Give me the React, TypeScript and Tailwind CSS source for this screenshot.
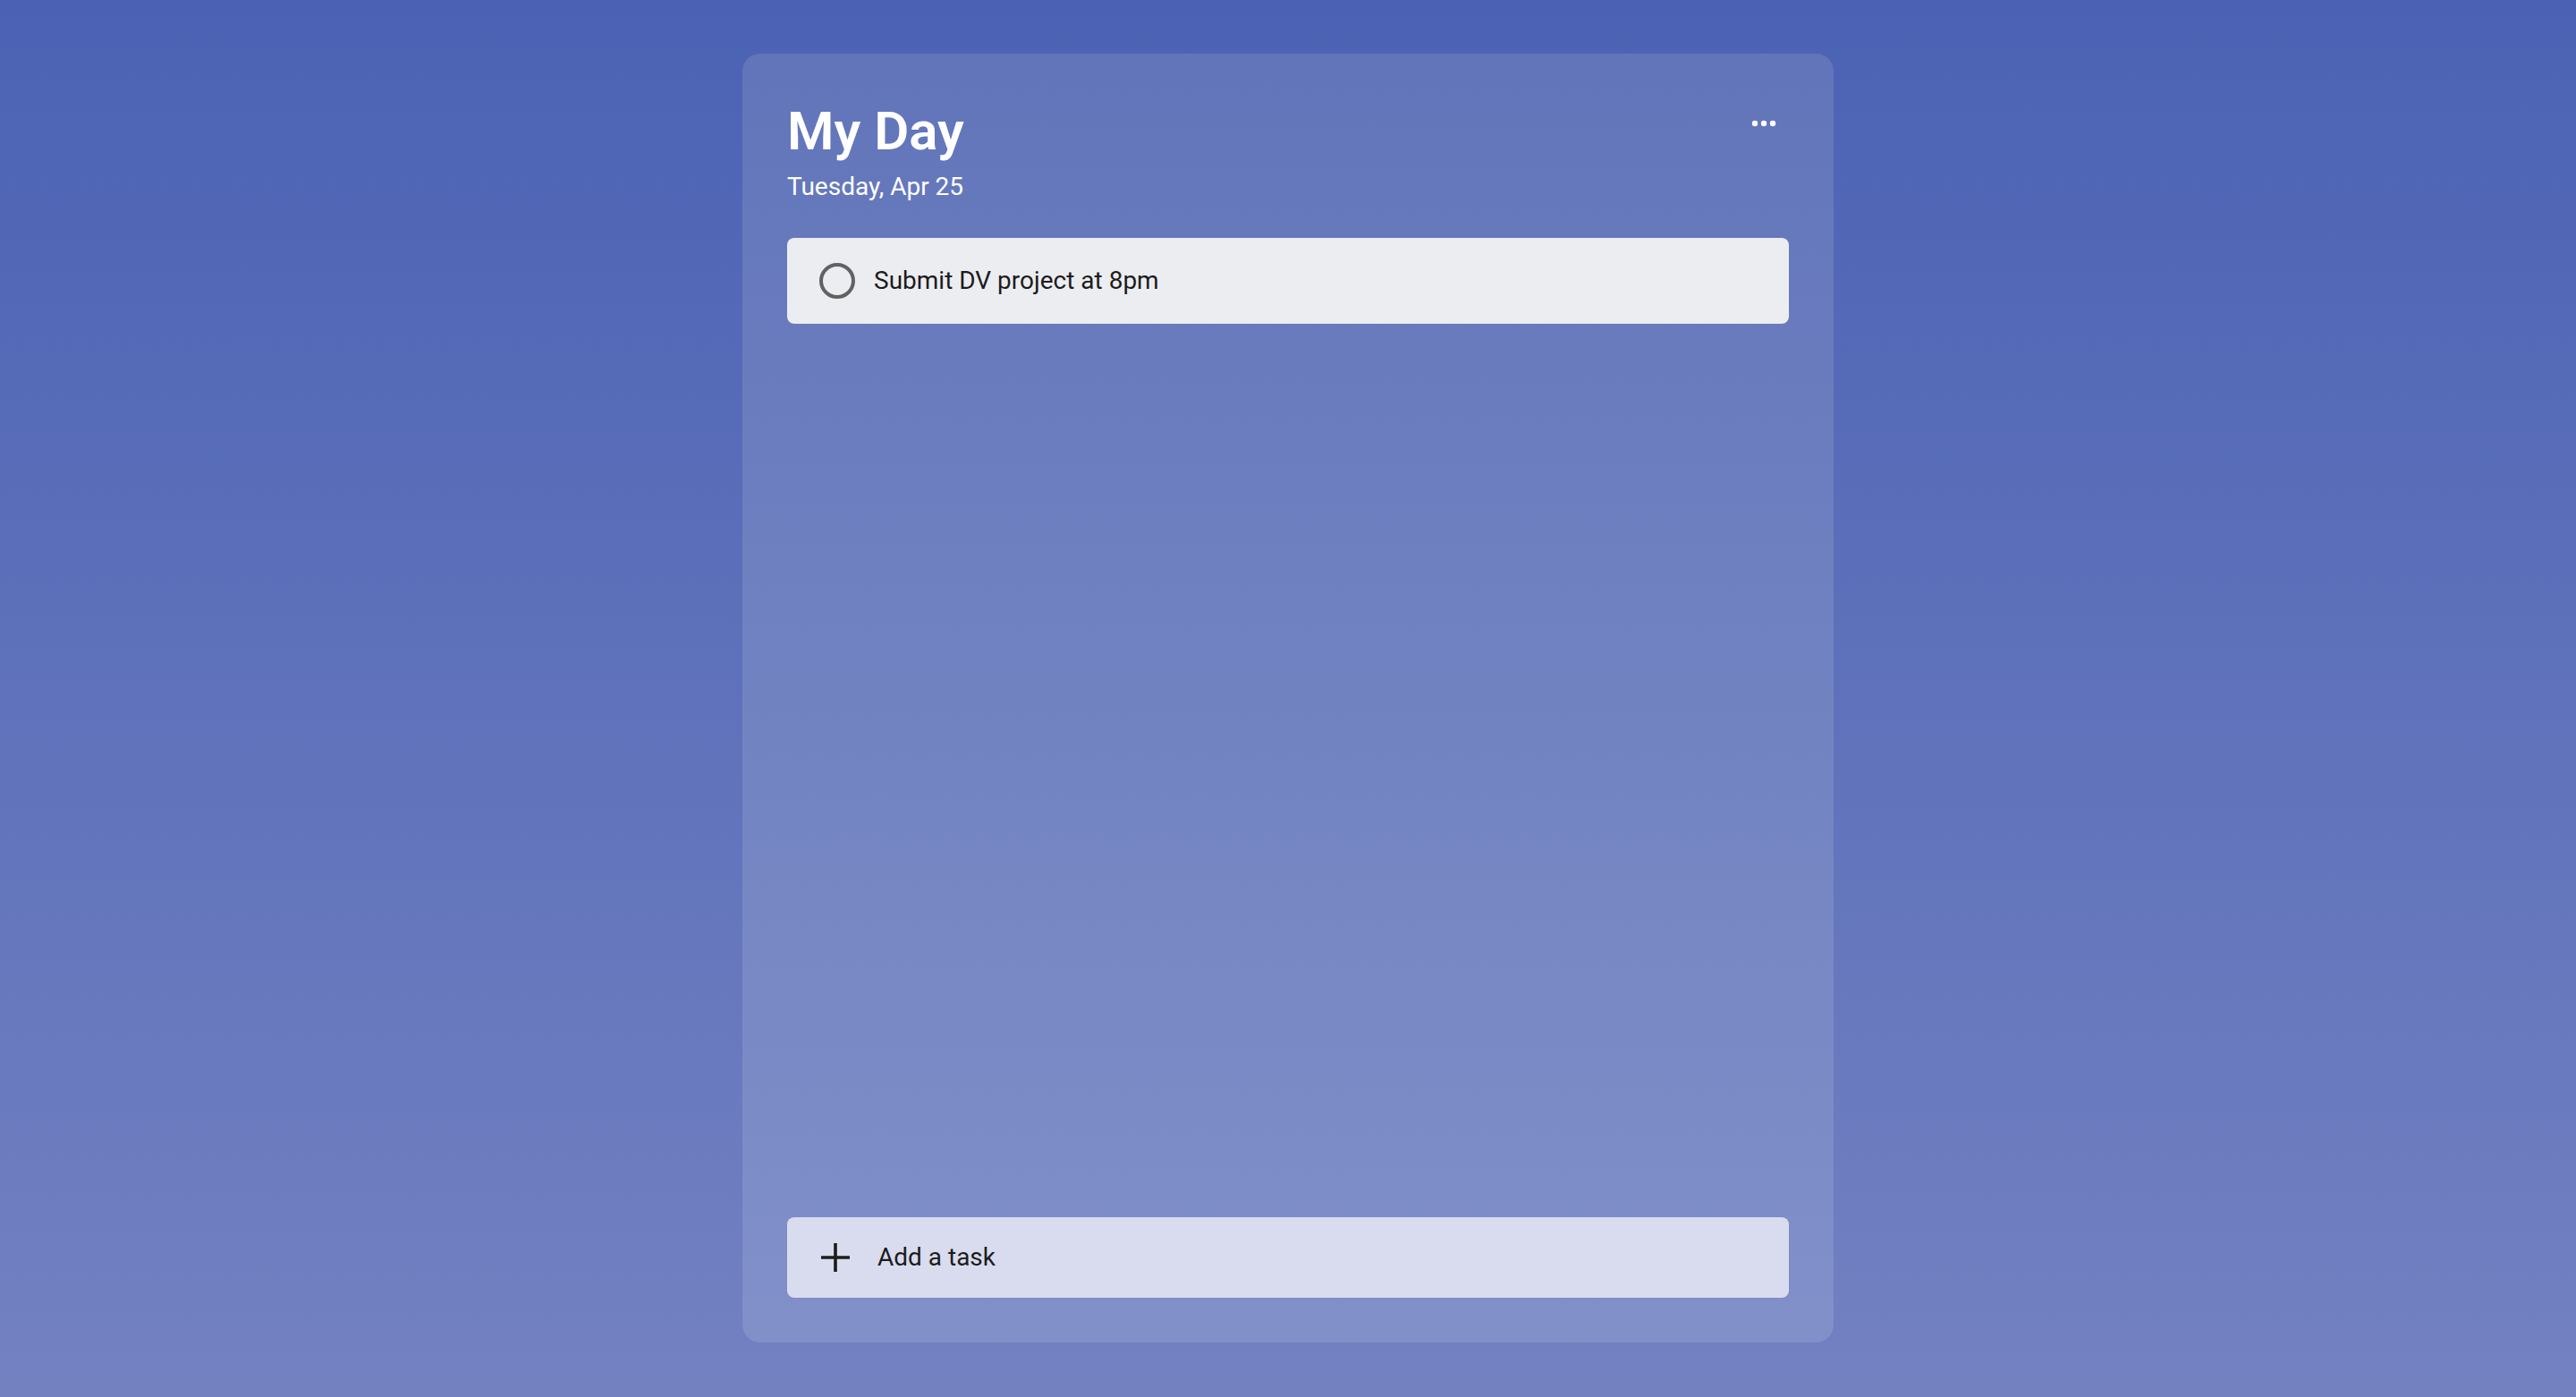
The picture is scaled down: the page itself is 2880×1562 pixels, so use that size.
import React from "react"

function MoreDots() {
  return (
    <svg width="36" height="12" viewBox="0 0 36 12" className="block">
      <circle cx="8" cy="6" r="3.2" fill="#ffffff" />
      <circle cx="18" cy="6" r="3.2" fill="#ffffff" />
      <circle cx="28" cy="6" r="3.2" fill="#ffffff" />
    </svg>
  )
}

function TaskRow({ title }: { title: string }) {
  return (
    <div className="flex h-[96px] items-center rounded-[8px] bg-[#ecedf1] pl-[36px]">
      <span className="h-[40px] w-[40px] shrink-0 rounded-full border-[4px] border-[#626262]" />
      <span className="ml-[21px] text-[28px] text-[#1c1c1c]">{title}</span>
    </div>
  )
}

export default function App() {
  return (
    <div
      className="flex min-h-[1562px] w-full justify-center bg-gradient-to-b from-[#4b62b4] to-[#7381c1] pt-[60px] pb-[60px]"
      style={{ fontFamily: "Roboto, 'Liberation Sans', sans-serif" }}
    >
      <div className="flex h-[1441px] w-[1220px] flex-col rounded-[20px] bg-gradient-to-b from-[#6275ba] to-[#8190c9] px-[50px] pb-[50px] pt-[57px]">
        <div className="flex items-start justify-between">
          <div>
            <h1 className="text-[60px] font-semibold leading-[60px] text-white">My Day</h1>
            <p className="mt-[15px] text-[28px] leading-[34px] text-white">Tuesday, Apr 25</p>
          </div>
          <div className="mr-[10px] mt-[15px]">
            <MoreDots />
          </div>
        </div>

        <div className="mt-[40px] flex flex-col gap-[12px]">
          <TaskRow title="Submit DV project at 8pm" />
        </div>

        <div className="flex-1" />

        <div className="flex h-[90px] items-center rounded-[8px] bg-[#d9dcee] pl-[37px]">
          <svg width="34" height="34" viewBox="0 0 34 34" className="shrink-0">
            <path d="M17 1v32M1 17h32" stroke="#1c1c1c" strokeWidth="3.6" fill="none" />
          </svg>
          <span className="ml-[30px] text-[28px] text-[#1c1c1c]">Add a task</span>
        </div>
      </div>
    </div>
  )
}
